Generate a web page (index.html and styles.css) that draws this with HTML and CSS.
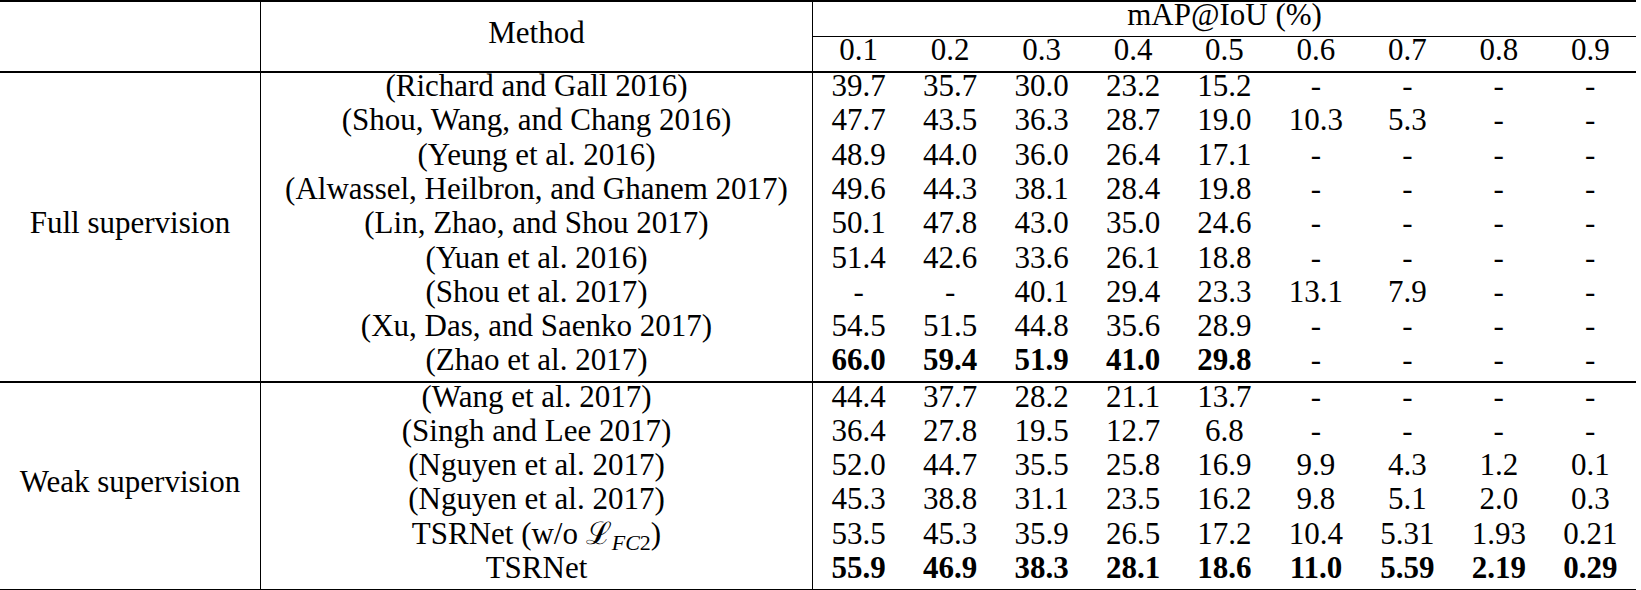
FILE: index.html
```html
<!DOCTYPE html>
<html lang="en">
<head>
<meta charset="utf-8">
<title>Results</title>
<link rel="stylesheet" href="styles.css">
</head>
<body>
<table class="results">
  <thead>
    <tr class="h1">
      <th rowspan="2" class="group vline hbottom"></th>
      <th rowspan="2" class="method vline hbottom">Method</th>
      <th colspan="9" class="span">mAP@IoU (%)</th>
    </tr>
    <tr class="h2">
      <th class="hbottom num">0.1</th><th class="hbottom num">0.2</th><th class="hbottom num">0.3</th><th class="hbottom num">0.4</th><th class="hbottom num">0.5</th><th class="hbottom num">0.6</th><th class="hbottom num">0.7</th><th class="hbottom num">0.8</th><th class="hbottom num">0.9</th>
    </tr>
  </thead>
  <tbody class="full">
    <tr><td rowspan="9" class="group vline sep">Full supervision</td><td class="vline">(Richard and Gall 2016)</td><td>39.7</td><td>35.7</td><td>30.0</td><td>23.2</td><td>15.2</td><td>-</td><td>-</td><td>-</td><td>-</td></tr>
    <tr><td class="vline">(Shou, Wang, and Chang 2016)</td><td>47.7</td><td>43.5</td><td>36.3</td><td>28.7</td><td>19.0</td><td>10.3</td><td>5.3</td><td>-</td><td>-</td></tr>
    <tr><td class="vline">(Yeung et al. 2016)</td><td>48.9</td><td>44.0</td><td>36.0</td><td>26.4</td><td>17.1</td><td>-</td><td>-</td><td>-</td><td>-</td></tr>
    <tr><td class="vline">(Alwassel, Heilbron, and Ghanem 2017)</td><td>49.6</td><td>44.3</td><td>38.1</td><td>28.4</td><td>19.8</td><td>-</td><td>-</td><td>-</td><td>-</td></tr>
    <tr><td class="vline">(Lin, Zhao, and Shou 2017)</td><td>50.1</td><td>47.8</td><td>43.0</td><td>35.0</td><td>24.6</td><td>-</td><td>-</td><td>-</td><td>-</td></tr>
    <tr><td class="vline">(Yuan et al. 2016)</td><td>51.4</td><td>42.6</td><td>33.6</td><td>26.1</td><td>18.8</td><td>-</td><td>-</td><td>-</td><td>-</td></tr>
    <tr><td class="vline">(Shou et al. 2017)</td><td>-</td><td>-</td><td>40.1</td><td>29.4</td><td>23.3</td><td>13.1</td><td>7.9</td><td>-</td><td>-</td></tr>
    <tr><td class="vline">(Xu, Das, and Saenko 2017)</td><td>54.5</td><td>51.5</td><td>44.8</td><td>35.6</td><td>28.9</td><td>-</td><td>-</td><td>-</td><td>-</td></tr>
    <tr class="last"><td class="vline">(Zhao et al. 2017)</td><td class="best">66.0</td><td class="best">59.4</td><td class="best">51.9</td><td class="best">41.0</td><td class="best">29.8</td><td>-</td><td>-</td><td>-</td><td>-</td></tr>
  </tbody>
  <tbody class="weak">
    <tr><td rowspan="6" class="group vline">Weak supervision</td><td class="vline">(Wang et al. 2017)</td><td>44.4</td><td>37.7</td><td>28.2</td><td>21.1</td><td>13.7</td><td>-</td><td>-</td><td>-</td><td>-</td></tr>
    <tr><td class="vline">(Singh and Lee 2017)</td><td>36.4</td><td>27.8</td><td>19.5</td><td>12.7</td><td>6.8</td><td>-</td><td>-</td><td>-</td><td>-</td></tr>
    <tr><td class="vline">(Nguyen et al. 2017)</td><td>52.0</td><td>44.7</td><td>35.5</td><td>25.8</td><td>16.9</td><td>9.9</td><td>4.3</td><td>1.2</td><td>0.1</td></tr>
    <tr><td class="vline">(Nguyen et al. 2017)</td><td>45.3</td><td>38.8</td><td>31.1</td><td>23.5</td><td>16.2</td><td>9.8</td><td>5.1</td><td>2.0</td><td>0.3</td></tr>
    <tr><td class="vline">TSRNet (w/o <span class="math">ℒ<sub><i>FC</i>2</sub></span>)</td><td>53.5</td><td>45.3</td><td>35.9</td><td>26.5</td><td>17.2</td><td>10.4</td><td>5.31</td><td>1.93</td><td>0.21</td></tr>
    <tr><td class="vline">TSRNet</td><td class="best">55.9</td><td class="best">46.9</td><td class="best">38.3</td><td class="best">28.1</td><td class="best">18.6</td><td class="best">11.0</td><td class="best">5.59</td><td class="best">2.19</td><td class="best">0.29</td></tr>
  </tbody>
</table>
</body>
</html>
```

FILE: styles.css
```css
html, body {
  margin: 0;
  padding: 0;
  background: #fff;
}

body {
  font: 31px/26px "Liberation Serif", "Times New Roman", serif;
  color: #000;
}

.results {
  width: 1636px;
  table-layout: fixed;
  border-collapse: separate;
  border-spacing: 0;
  border-top: 2px solid #000;
  border-bottom: 2px solid #000;
  font: 31px/26px "Liberation Serif", "Times New Roman", serif;
}

.results .group { width: 260px; }
.results .method { width: 551px; }

.results th,
.results td {
  padding: 0 0 8px;
  text-align: center;
  vertical-align: middle;
  font-weight: normal;
  white-space: nowrap;
  line-height: 26px;
}

.results .h1 { height: 33px; }
.results .h2 { height: 34px; }
.results tbody tr { height: 34.3px; }

.results .span { border-bottom: 1px solid #000; }
.results .hbottom { border-bottom: 2px solid #000; }

.results .vline { border-right: 1px solid #000; }

.results .full .sep,
.results .full .last td { border-bottom: 2px solid #000; }

.results td.best { font-weight: bold; }

.math sub {
  font-size: 22px;
  vertical-align: -6px;
  line-height: 0;
}
```
